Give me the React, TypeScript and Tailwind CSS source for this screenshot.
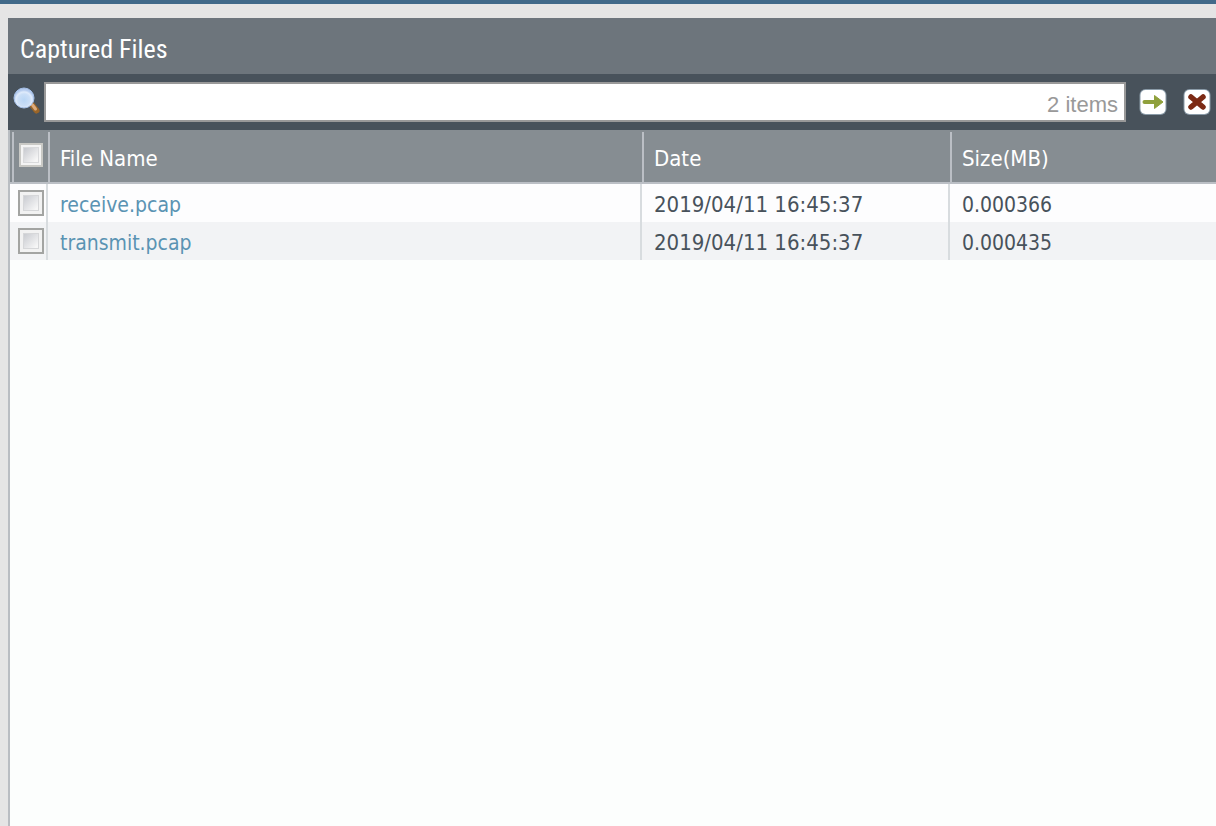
import { useState } from "react";

type CapturedFile = {
  name: string;
  date: string;
  size: string;
};

const files: CapturedFile[] = [
  { name: "receive.pcap", date: "2019/04/11 16:45:37", size: "0.000366" },
  { name: "transmit.pcap", date: "2019/04/11 16:45:37", size: "0.000435" },
];

const SearchIcon = () => (
  <svg viewBox="0 0 30 30" className="size-[30px]" aria-hidden="true">
    <defs>
      <radialGradient id="lens" cx="50%" cy="60%" r="50%">
        <stop offset="0" stopColor="#b9d6f5" />
        <stop offset="0.6" stopColor="#cbdff7" />
        <stop offset="0.8" stopColor="#dfebfb" />
        <stop offset="1" stopColor="#b4cbee" />
      </radialGradient>
    </defs>
    <path d="M20.500 18.500l4 5" stroke="#9a6528" strokeWidth="6" strokeLinecap="round" />
    <path d="M20.500 18l3 4" stroke="#dcab7c" strokeWidth="3" strokeLinecap="round" />
    <circle cx="12" cy="11" r="10" fill="url(#lens)" stroke="#a5c0e8" strokeWidth="1" />
  </svg>
);

const ArrowIcon = () => (
  <svg viewBox="0 0 28 28" className="size-7" aria-hidden="true">
    <rect x="0.500" y="1" width="27" height="26" rx="6" fill="#8a9ba8" />
    <rect x="1.500" y="2" width="25" height="24" rx="5" fill="#fff" />
    <path d="M5.500 14H17" stroke="#8fa03c" strokeWidth="4" strokeLinecap="round" />
    <path d="M15.500 7.500L24 14l-8.500 6.500z" fill="#8fa03c" stroke="#8fa03c" strokeLinejoin="round" />
  </svg>
);

const ClearIcon = () => (
  <svg viewBox="0 0 28 28" className="size-7" aria-hidden="true">
    <rect x="0.500" y="1" width="27" height="26" rx="6" fill="#8a9ba8" />
    <rect x="1.500" y="2" width="25" height="24" rx="5" fill="#fff" />
    <path
      d="M8 9l12 10M20 9l-12 10"
      stroke="#7c2a14"
      strokeWidth="5.500"
      strokeLinecap="round"
    />
  </svg>
);

const Toolbar = ({
  count,
  query,
  onChange,
}: {
  count: number;
  query: string;
  onChange: (value: string) => void;
}) => {
  return (
    <form
      className="flex h-14 items-center bg-[#48525b] pl-1 pr-[5px]"
      onSubmit={(e) => e.preventDefault()}
    >
      <label htmlFor="search" className="w-8 shrink-0">
        <SearchIcon />
      </label>
      <div className="flex h-10 flex-1 items-center border-2 border-[#999] bg-white">
        <input
          id="search"
          type="text"
          aria-label="Search"
          value={query}
          onChange={(e) => onChange(e.target.value)}
          className="h-full min-w-0 flex-1 px-2 text-[22px] outline-none"
        />
        <span className="px-1.5 pt-1.5 font-['Liberation_Sans',sans-serif] text-[22px] leading-7 text-[#999]">
          {count} items
        </span>
      </div>
      <div className="ml-[13px] flex gap-4">
        <button type="submit" aria-label="Apply filter">
          <ArrowIcon />
        </button>
        <button type="button" aria-label="Clear filter" onClick={() => onChange("")}>
          <ClearIcon />
        </button>
      </div>
    </form>
  );
};

const headerCell =
  "flex h-[50px] items-center border-l-2 border-[#bbbfc5] pl-2.5 pt-1 text-left";

const App = () => {
  const [query, setQuery] = useState("");
  const [selected, setSelected] = useState<string[]>([]);
  const visible = files.filter((file) => file.name.includes(query));

  const toggle = (name: string) =>
    setSelected((prev) =>
      prev.includes(name) ? prev.filter((n) => n !== name) : [...prev, name]
    );

  return (
    <div className="flex min-h-screen flex-col border-t-4 border-[#416a89] bg-[#e5e5e5] pl-2 pt-3.5 font-['DejaVu_Sans_Condensed','Noto_Sans',sans-serif] text-[21px] leading-7 text-[#48525b]">
      <h1 className="flex h-14 items-center bg-[#6d757c] pl-3 pt-1.5 font-['Roboto_Condensed',Roboto,sans-serif] text-[26px] leading-8 text-white">
        Captured Files
      </h1>
      <Toolbar count={visible.length} query={query} onChange={setQuery} />
      <div className="flex-1 border-l-2 border-[#b9bdc2] bg-[#fcfefd]">
        <table className="w-full table-fixed border-separate border-spacing-0">
          <colgroup>
            <col className="w-[38px]" />
            <col className="w-[594px]" />
            <col className="w-[308px]" />
            <col />
          </colgroup>
          <thead className="bg-[#868d92] text-[22px] text-white">
            <tr>
              <th className="border-b-2 border-[#bbbfc5] p-0 pt-0.5 font-normal">
                <div className="ml-0.5 flex h-[50px] items-center border-l-2 border-[#bbbfc5] pb-1 pl-[5px]">
                  <input
                    type="checkbox"
                    aria-label="Select all files"
                    checked={selected.length === files.length}
                    onChange={(e) =>
                      setSelected(e.target.checked ? files.map((f) => f.name) : [])
                    }
                    className="size-6 appearance-none border-2 border-[#c9c9c5] bg-linear-to-br from-[#cbcdd2] from-20% to-[#f6f6f6] to-75% shadow-[inset_0_0_0_2px_#f4f4f4,inset_0_0_0_3px_#d9dadc] checked:to-[#6d757c]"
                  />
                </div>
              </th>
              {["File Name", "Date", "Size(MB)"].map((title) => (
                <th key={title} className="border-b-2 border-[#bbbfc5] p-0 pt-0.5 font-normal">
                  <div className={headerCell}>{title}</div>
                </th>
              ))}
            </tr>
          </thead>
          <tbody>
            {visible.map((file) => (
              <tr key={file.name} className="h-[38px] bg-[#fdfdfe] even:bg-[#f2f3f5]">
                <td className="border-r-2 border-[#d8dcdf] p-0 pl-2">
                  <input
                    type="checkbox"
                    aria-label={`Select ${file.name}`}
                    checked={selected.includes(file.name)}
                    onChange={() => toggle(file.name)}
                    className="block size-[26px] appearance-none border-2 border-[#a3a4a2] bg-linear-to-br from-[#cbcdd2] from-20% to-[#f6f6f6] to-75% shadow-[inset_0_0_0_3px_#f2f2f2,inset_0_0_0_4px_#d6d7d9] checked:to-[#6d757c]"
                  />
                </td>
                <td className="border-r-2 border-[#d8dcdf] p-0 pl-3 pt-1">
                  <a href="#" className="text-[#5a93b3]">
                    {file.name}
                  </a>
                </td>
                <td className="border-r-2 border-[#d8dcdf] p-0 pl-3 pt-1 text-[22px]">
                  {file.date}
                </td>
                <td className="p-0 pl-3 pt-1">{file.size}</td>
              </tr>
            ))}
          </tbody>
        </table>
      </div>
    </div>
  );
};

export default App;
